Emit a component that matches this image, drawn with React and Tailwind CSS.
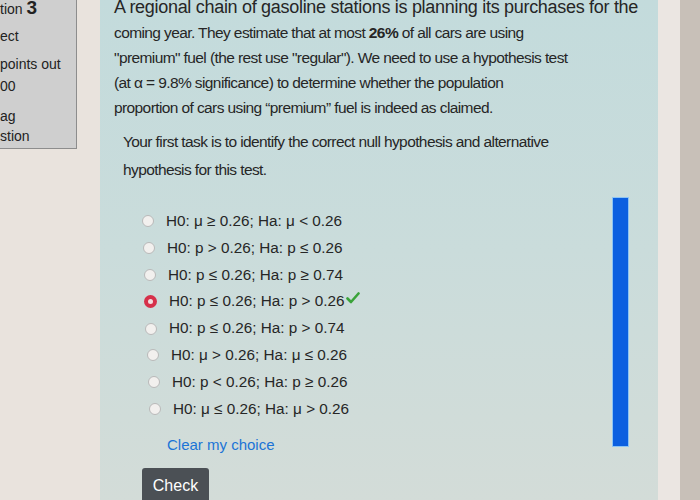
import React from 'react';

const OPTIONS = [
    { id: 1, label: "H0: μ ≥ 0.26; Ha: μ < 0.26", indent: "pl-[28px]" },
    { id: 2, label: "H0: p > 0.26; Ha: p ≤ 0.26", indent: "pl-[29px]" },
    { id: 3, label: "H0: p ≤ 0.26; Ha: p ≥ 0.74", indent: "pl-[30px]" },
    { id: 4, label: "H0: p ≤ 0.26; Ha: p > 0.26", indent: "pl-[30px]", selected: true },
    { id: 5, label: "H0: p ≤ 0.26; Ha: p > 0.74", indent: "pl-[31px]" },
    { id: 6, label: "H0: μ > 0.26; Ha: μ ≤ 0.26", indent: "pl-[33px]" },
    { id: 7, label: "H0: p < 0.26; Ha: p ≥ 0.26", indent: "pl-[34px]" },
    { id: 8, label: "H0: μ ≤ 0.26; Ha: μ > 0.26", indent: "pl-[35px]" },
];

const Radio = ({ selected }) => (
    selected ? (
        <span className="w-[13px] h-[13px] rounded-full bg-[#d6304a] flex items-center justify-center shrink-0">
            <span className="w-[5px] h-[5px] rounded-full bg-[#f4dde0]" />
        </span>
    ) : (
        <span className="w-[12px] h-[12px] rounded-full bg-[#f2f0ee] border border-[#b9b9b9] shrink-0" />
    )
);

const App = () => {
    return (
        <div
            className="w-[700px] h-[500px] overflow-hidden flex bg-[#e9e3dd] text-[#262626]"
            style={{ fontFamily: '"Liberation Sans", Arial, sans-serif' }}
        >
            {/* LEFT NAV */}
            <div className="w-[100px] shrink-0">
                <div className="w-[77px] h-[150px] bg-[#cfcfcf] border-r border-b border-[#8d8d8d] text-[14px] leading-[18px] text-[#222]">
                    <div className="-mt-[1px]">
                        tion <span className="font-bold text-[19px]">3</span>
                    </div>
                    <div className="mt-[9px]">ect</div>
                    <div className="mt-[10px]">points out</div>
                    <div className="mt-[4px]">00</div>
                    <div className="mt-[12px]">ag</div>
                    <div className="mt-[2px]">stion</div>
                </div>
            </div>

            {/* QUESTION PANEL */}
            <main className="w-[558px] shrink-0 bg-gradient-to-b from-[#c3dbdc] via-[#cadcdb] to-[#d3dcd8] pl-[14px] pr-[8px]">
                <p className="text-[15.5px] tracking-[-0.6px] leading-[25px] -mt-[5px] whitespace-nowrap">
                    <span className="text-[18px] tracking-[-0.3px]">A regional chain of gasoline stations is planning its purchases for the</span><br />
                    coming year. They estimate that at most <b>26%</b> of all cars are using<br />
                    "premium" fuel (the rest use "regular"). We need to use a hypothesis test<br />
                    (at α = 9.8% significance) to determine whether the population<br />
                    proportion of cars using “premium” fuel is indeed as claimed.
                </p>
                <p className="text-[15.5px] tracking-[-0.6px] leading-[28px] mt-[8px] pl-[9px] whitespace-nowrap">
                    Your first task is to identify the correct null hypothesis and alternative<br />
                    hypothesis for this test.
                </p>

                <div className="flex items-start mt-[14px]">
                    <div className="flex-1">
                        <div className="pt-[10px]">
                            {OPTIONS.map(opt => (
                                <div key={opt.id} className={`flex items-center gap-[12px] h-[26.8px] text-[15.3px] ${opt.indent}`}>
                                    <Radio selected={opt.selected} />
                                    <span>{opt.label}</span>
                                    {opt.selected && (
                                        <svg width="14" height="12" viewBox="0 0 14 12" className="-ml-[11px] -mt-[8px]">
                                            <path d="M1.5 6.5 L5 10 L12.5 1.5" fill="none" stroke="#3aa33a" strokeWidth="2.6" strokeLinecap="round" strokeLinejoin="round" />
                                        </svg>
                                    )}
                                </div>
                            ))}
                        </div>
                        <div className="pl-[53px] mt-[12px] text-[15px] text-[#1b74d6]">Clear my choice</div>
                        <div className="pl-[28px] mt-[11px]">
                            <button className="w-[67px] h-[34px] bg-[#4b5055] text-white text-[16px] rounded-[3px] pt-[3px]">
                                Check
                            </button>
                        </div>
                    </div>
                    <div className="w-[15px] h-[248px] bg-[#0b5fe0] mr-[22px] shadow-[0_0_0_1px_#8cc4f4] shrink-0" />
                </div>
            </main>

            {/* RIGHT EDGE */}
            <div className="w-[22px] shrink-0 bg-[#ebe6e2]" />
            <div className="flex-1 bg-[#c8c0b8]" />
        </div>
    );
};

export default App;
